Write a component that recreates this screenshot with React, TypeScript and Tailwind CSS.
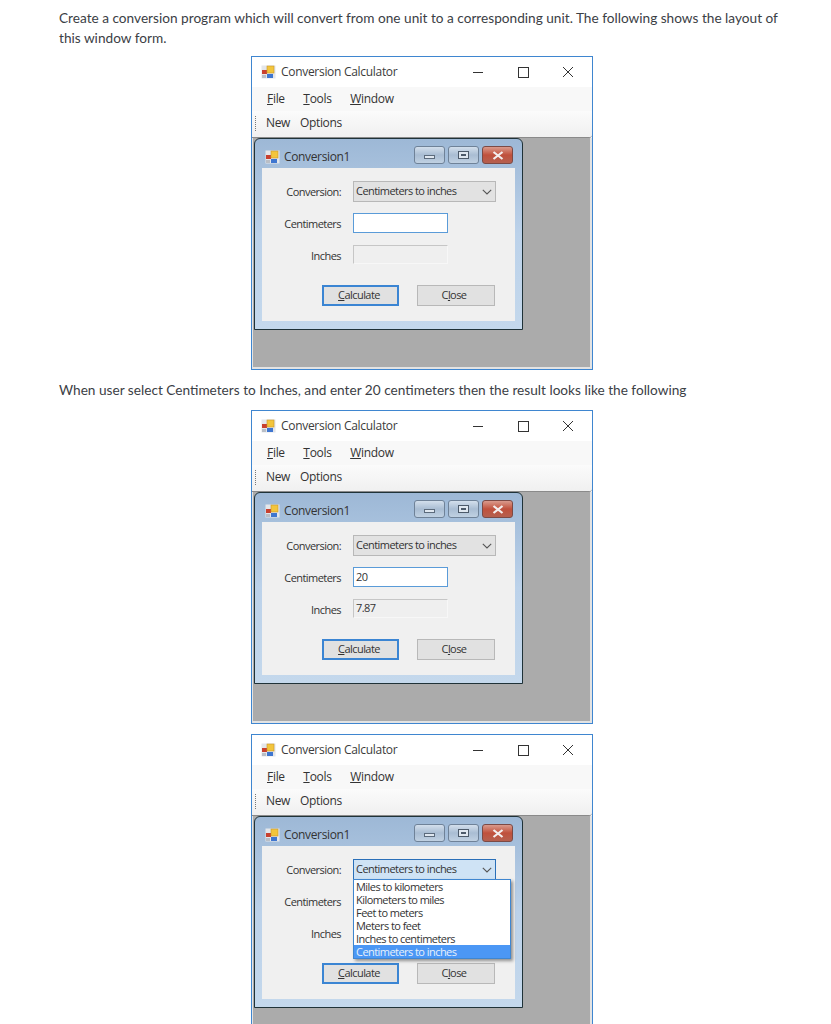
import React from "react";

const AppIcon = () => (
  <svg width="15" height="14" viewBox="0 0 15 14" className="shrink-0">
    <rect x="0.5" y="0.5" width="14" height="13" fill="#e4e6ea" />
    <rect x="1" y="5" width="5" height="4" fill="#c8402f" />
    <rect x="6" y="1" width="7" height="7" fill="#f3c53c" stroke="#c9962a" strokeWidth="0.6" />
    <rect x="6" y="9" width="6" height="4" fill="#3f76d0" />
    <rect x="1" y="10" width="4" height="3" fill="#b9bec6" />
  </svg>
);

const Under = ({ children }: { children: React.ReactNode }) => <span className="underline underline-offset-1">{children}</span>;

const Chevron = () => (
  <svg width="10" height="6" viewBox="0 0 10 6" fill="none" stroke="#555" strokeWidth="1.1"><path d="M0.8 0.8 5 5 9.2 0.8" /></svg>
);

const AeroButton = ({ kind }: { kind: "min" | "max" | "close" }) => {
  const tone =
    kind === "close"
      ? "border-[#7c4a45] bg-gradient-to-b from-[#d99a8c] via-[#c0503c] to-[#b5604f]"
      : "border-[#6f8298] bg-gradient-to-b from-[#d3dfec] via-[#a9bdd3] to-[#c0d1e2]";
  return (
    <div className={`w-[31px] h-[18px] rounded-[3px] border flex items-center justify-center ${tone}`}>
      {kind === "min" && <div className="w-[11px] h-[4px] mt-[3px] bg-[#dfe7f0] border border-[#5c6b7c]" />}
      {kind === "max" && <div className="w-[11px] h-[8px] bg-[#dfe7f0] border border-[#4c5a6a] flex items-center justify-center"><div className="w-[5px] h-[2px] bg-[#4c5a6a]" /></div>}
      {kind === "close" && (
        <svg width="12" height="9" viewBox="0 0 12 9" stroke="#f3eeee" strokeWidth="2.2"><path d="M1.5 1 10.5 8M10.5 1 1.5 8" /></svg>
      )}
    </div>
  );
};

const items = ["Miles to kilometers", "Kilometers to miles", "Feet to meters", "Meters to feet", "Inches to centimeters"];

const ConversionWindow = ({ cm = "", inches = "", open = false }: { cm?: string; inches?: string; open?: boolean }) => (
  <div className="ml-[251px] w-[342px] h-[314px] shrink-0 border border-[#3f86d0] bg-white flex flex-col font-['Open_Sans',sans-serif] text-[#333]">
    <div className="h-[30px] shrink-0 flex items-center pl-[9px] pr-[18px] text-[12px] tracking-[-0.3px] text-[#3c3c3c]">
      <AppIcon />
      <span className="ml-[5px]">Conversion Calculator</span>
      <svg width="12" height="12" viewBox="0 0 12 12" className="ml-auto" stroke="#333" fill="none"><path d="M1 6.5h10" /></svg>
      <svg width="11" height="11" viewBox="0 0 11 11" className="ml-[34px]" stroke="#333" fill="none"><rect x="0.5" y="0.5" width="10" height="10" /></svg>
      <svg width="12" height="12" viewBox="0 0 12 12" className="ml-[33px]" stroke="#333" fill="none"><path d="M1 1l10 10M11 1 1 11" /></svg>
    </div>
    <div className="h-[24px] shrink-0 flex items-center gap-[18.5px] pl-[15px] text-[12px] tracking-[-0.3px] bg-[#f8f8f8]">
      <span><Under>F</Under>ile</span>
      <span><Under>T</Under>ools</span>
      <span><Under>W</Under>indow</span>
    </div>
    <div className="h-[27px] shrink-0 flex items-center text-[12px] tracking-[-0.35px] bg-gradient-to-b from-[#fbfbfb] to-[#f0f0f0] border-b border-[#8a8a8a] rounded-br-[3px] pb-[2px]">
      <div className="ml-[3px] h-[15px] w-[1px] border-l border-dotted border-l-[#777]" />
      <span className="ml-[10px]">New</span>
      <span className="ml-[10px]">Options</span>
    </div>
    <div className="flex-1 min-h-0 bg-[#ababab] pl-[1px] border-r-[2px] border-b-[2px] border-l border-[#e3e3e3]">
      <div className="w-[269px] h-[192px] border border-[#1f3238] rounded-t-[6px] bg-gradient-to-b from-[#9db8d6] via-[#bcd2ea] to-[#c4d8ec] flex flex-col px-[7px] pb-[8px]">
        <div className="h-[29px] shrink-0 flex items-center pl-[3px] pr-[1px] pt-[6px]">
          <AppIcon />
          <span className="ml-[4px] text-[12px] tracking-[-0.35px] text-[#333]">Conversion1</span>
          <div className="ml-auto flex gap-[3px] -mt-[3px] pr-[1px]">
            <AeroButton kind="min" />
            <AeroButton kind="max" />
            <AeroButton kind="close" />
          </div>
        </div>
        <div className="flex-1 bg-[#f0f0f0] flex flex-col pt-[13px] text-[11px] tracking-[-0.55px] text-[#333]">
          <div className="flex items-center h-[21px] relative">
            <span className="w-[79px] text-right pt-[2px]">Conversion:</span>
            <div className={`ml-[12px] w-[143px] h-[21px] flex items-center pl-[2px] pr-[3px] justify-between border ${open ? "border-[#2a6fb8] bg-[#cfe3f5]" : "border-[#b8b8b8] bg-[#e2e2e2]"}`}>
              <span>Centimeters to inches</span>
              <Chevron />
            </div>
            {open && (
              <div className="absolute left-[91px] top-[20px] z-10 w-[158px] h-[80px] border border-[#3f86d0] bg-white shadow-[2px_2px_3px_rgba(0,0,0,0.4)] flex flex-col leading-[13px]">
                {items.map((t) => (
                  <div key={t} className="pl-[2px] h-[13px] shrink-0">{t}</div>
                ))}
                <div className="pl-[2px] h-[13px] shrink-0 bg-[#4b97f5] text-[#e8f1fb]">Centimeters to inches</div>
              </div>
            )}
          </div>
          <div className="flex items-center h-[20px] mt-[11px]">
            <span className="w-[79px] text-right pt-[2px]">Centimeters</span>
            <div className="ml-[12px] w-[95px] h-[20px] border border-[#5a9bd8] bg-white flex items-center pl-[2px]">{cm}</div>
          </div>
          <div className="flex items-center h-[19px] mt-[12px]">
            <span className="w-[79px] text-right pt-[4px]">Inches</span>
            <div className="ml-[12px] w-[95px] h-[19px] border border-[#c6c6c6] border-r-[#f7f7f7] border-b-[#f7f7f7] bg-[#efefef] flex items-center pl-[2px]">{inches}</div>
          </div>
          <div className="flex h-[21px] mt-[21px]">
            <div className="ml-[60px] w-[77px] h-[21px] border-2 border-[#3b85d3] bg-[#e1e1e1] flex items-center justify-center pr-[3px]"><span><Under>C</Under>alculate</span></div>
            <div className="ml-[18px] w-[78px] h-[21px] border border-[#b8b8b8] bg-[#e1e1e1] flex items-center justify-center pr-[4px]"><span>C<Under>l</Under>ose</span></div>
          </div>
        </div>
      </div>
    </div>
  </div>
);

export default function App() {
  return (
    <div className="w-[831px] h-[1024px] overflow-hidden bg-white flex flex-col font-['Lato',sans-serif] text-[13.65px] text-[#3b4045]">
      <p className="mt-[9px] ml-[59px] w-[730px] h-[47px] shrink-0 leading-[19.5px]">
        Create a conversion program which will convert from one unit to a corresponding unit. The following shows the layout of this window form.
      </p>
      <ConversionWindow />
      <p className="ml-[59px] h-[40px] shrink-0 leading-[41px] whitespace-nowrap">
        When user select Centimeters to Inches, and enter 20 centimeters then the result looks like the following
      </p>
      <ConversionWindow cm="20" inches="7.87" />
      <div className="h-[10px] shrink-0" />
      <ConversionWindow open />
    </div>
  );
}
